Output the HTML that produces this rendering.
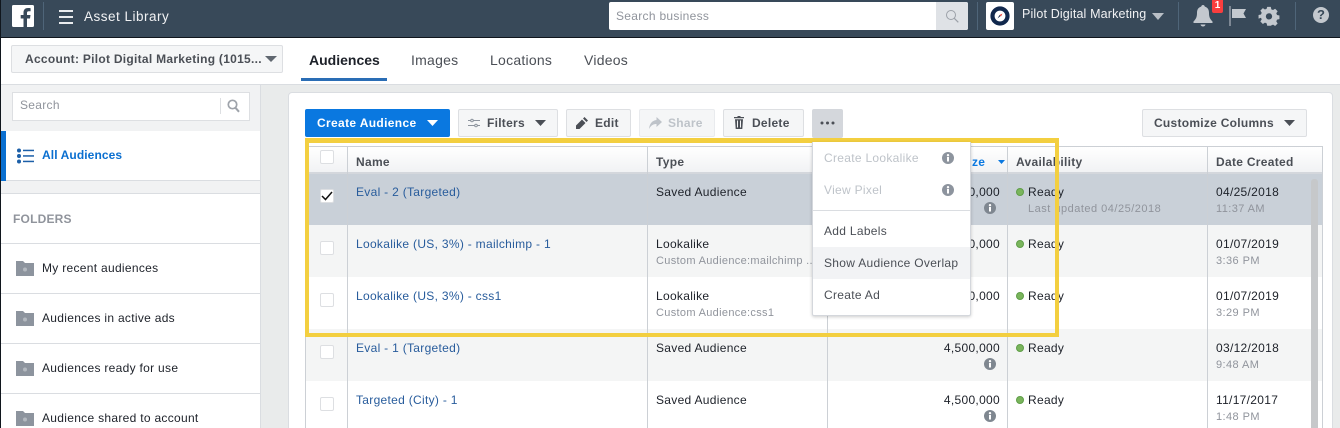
<!DOCTYPE html>
<html><head><meta charset="utf-8"><style>
*{box-sizing:border-box}
html,body{margin:0;padding:0;width:1340px;height:428px;overflow:hidden;background:#e9ebeb}
body{position:relative;font-family:"Liberation Sans",sans-serif;font-size:12px;color:#1d2129;letter-spacing:.3px}
.a{position:absolute;white-space:nowrap}
.b{position:absolute;background:#f5f6f7;border:1px solid #dddfe2;border-radius:2px;color:#4b4f56;font-weight:bold;height:28px;line-height:26px;white-space:nowrap;letter-spacing:.27px}
.l{color:#285c9c}
.s{color:#90949c;letter-spacing:.42px}
.cb{position:absolute;width:14px;height:14px;background:#fff;border:1px solid #dddfe2;border-radius:2px}
.v{position:absolute;width:1px;background:#ccd0d5}
.h{position:absolute;background:#dadde1;height:1px}
.t{position:absolute;line-height:14px;white-space:nowrap}
.dot{position:absolute;left:1016px;width:8px;height:8px;border-radius:50%;background:#7ab55c;border:1px solid #5f9e48}
svg{position:absolute;display:block}
</style></head><body>

<!-- top bar -->
<div class="a" style="left:0;top:0;width:1340px;height:38px;background:#384959;border-bottom:1px solid #10161d"></div>
<svg style="left:12px;top:5px" width="22" height="22" viewBox="0 0 22 22"><path fill="#fff" d="M1.5 0h19A1.5 1.5 0 0 1 22 1.500v19a1.500 1.500 0 0 1-1.500 1.500H15v-8.500h3l.5-3.500H15V8c0-1 .4-1.700 1.800-1.700h1.800V3.200c-.4 0-1.400-.2-2.600-.2-2.700 0-4.500 1.600-4.500 4.600V10H8.700v3.500h2.800V22h-10A1.500 1.500 0 0 1 0 20.500v-19A1.500 1.500 0 0 1 1.500 0z"/></svg>
<div class="a" style="left:43px;top:2px;width:1px;height:28px;background:#4f6579"></div>
<div class="a" style="left:59px;top:10px;width:14px;height:2px;background:#e9ebee"></div>
<div class="a" style="left:59px;top:16px;width:14px;height:2px;background:#e9ebee"></div>
<div class="a" style="left:59px;top:22px;width:14px;height:2px;background:#e9ebee"></div>
<div class="a" style="left:84px;top:9px;font-size:13.500px;line-height:16px;color:#f1f2f4;letter-spacing:.5px">Asset Library</div>

<div class="a" style="left:609px;top:2px;width:359px;height:28px;background:#fff;border-radius:2px"></div>
<div class="a" style="left:936px;top:2px;width:32px;height:28px;background:#dfe2e6;border-radius:0 2px 2px 0"></div>
<div class="a" style="left:616px;top:9px;color:#90949c;line-height:15px;letter-spacing:.3px">Search business</div>
<svg style="left:945px;top:9px" width="15" height="15" viewBox="0 0 15 15"><circle cx="6" cy="6" r="4.500" fill="none" stroke="#9ca1a8" stroke-width="1"/><path d="M9.300 9.300l4 4" stroke="#9ca1a8" stroke-width="1.200"/></svg>
<div class="a" style="left:977px;top:2px;width:1px;height:28px;background:#4f6579"></div>
<div class="a" style="left:986px;top:2px;width:28px;height:28px;background:#fff;border-radius:2px"></div>
<svg style="left:990px;top:6px" width="20" height="20" viewBox="0 0 20 20"><circle cx="10" cy="10" r="7.500" fill="none" stroke="#11284d" stroke-width="4.200"/><circle cx="10" cy="10" r="4.500" fill="#fff"/><path d="M7.500 12.500l2-3.500 1 1z" fill="#11284d"/><path d="M12.500 7.500l-3 1.500 1.500 1.500z" fill="#e8463c"/></svg>
<div class="a" style="left:1022px;top:7px;color:#f1f2f4;line-height:15px;letter-spacing:.15px;font-size:12.500px">Pilot Digital Marketing</div>
<svg style="left:1152px;top:13px" width="12" height="7" viewBox="0 0 12 7"><path d="M0 0h12L6 7z" fill="#b9bfc6"/></svg>
<div class="a" style="left:1178px;top:2px;width:1px;height:28px;background:#4f6579"></div>
<svg style="left:1193px;top:5px" width="20" height="22" viewBox="0 0 20 22"><path fill="#c3c8ce" d="M10 0c1 0 1.700.7 1.800 1.600C15 2.500 16 5 16 8c0 4 1 6 3.500 8.500V18H.5v-1.500C3 14 4 12 4 8c0-3 1-5.500 4.200-6.400C8.300.7 9 0 10 0zM7.500 19.500h5c-.3 1.200-1.300 2-2.500 2s-2.200-.8-2.500-2z"/></svg>
<div class="a" style="left:1212px;top:0;width:11px;height:13px;background:#fa3e3e;border-radius:0 0 2px 2px;color:#fff;font-weight:bold;font-size:10px;line-height:12px;text-align:center;letter-spacing:0">1</div>
<svg style="left:1229px;top:6px" width="18" height="20" viewBox="0 0 18 20"><path d="M1 0v20" stroke="#c3c8ce" stroke-width="1"/><path fill="#c3c8ce" d="M3 3h14l-2.500 4.500L17 12H3z"/></svg>
<svg style="left:1258px;top:5px" width="22" height="22" viewBox="0 0 22 22"><path fill="#c3c8ce" fill-rule="evenodd" d="M9 1h4l.6 2.700 1.900.8 2.300-1.500 2.800 2.800-1.500 2.300.8 1.900 2.700.6v4l-2.700.6-.8 1.900 1.500 2.300-2.800 2.800-2.300-1.500-1.900.8L13 22H9l-.6-2.700-1.900-.8-2.300 1.500-2.800-2.800 1.500-2.300-.8-1.900L-.6 14v-4l2.700-.6.800-1.900-1.500-2.300 2.800-2.800 2.300 1.500 1.900-.8zM11 8a3.500 3.500 0 1 0 0 7 3.500 3.500 0 0 0 0-7z" transform="translate(1.100 1) scale(.9)"/></svg>
<div class="a" style="left:1295px;top:2px;width:1px;height:28px;background:#4f6579"></div>
<div class="a" style="left:1313px;top:7px;width:16px;height:16px;border-radius:50%;background:#c3c8ce;color:#384959;font-weight:bold;font-size:13px;line-height:16px;text-align:center;letter-spacing:0">?</div>

<!-- sub header -->
<div class="a" style="left:1px;top:38px;width:1339px;height:47px;background:#fff;border-bottom:1px solid #dadde1"></div>
<div class="b" style="left:11px;top:45px;width:272px;padding-left:13px;letter-spacing:.28px;font-size:12px">Account: Pilot Digital Marketing (1015...</div>
<svg style="left:265px;top:56px" width="12" height="6" viewBox="0 0 12 6"><path d="M0 0h12L6 6z" fill="#606770"/></svg>
<div class="a" style="left:309px;top:52px;font-size:14px;line-height:17px;color:#1d2129;font-weight:bold;letter-spacing:0">Audiences</div>
<div class="a" style="left:301px;top:78px;width:86px;height:3px;background:#2a6db5"></div>
<div class="a" style="left:411px;top:52px;font-size:14px;line-height:17px;color:#4b4f56;letter-spacing:.25px">Images</div>
<div class="a" style="left:490px;top:52px;font-size:14px;line-height:17px;color:#4b4f56;letter-spacing:.25px">Locations</div>
<div class="a" style="left:584px;top:52px;font-size:14px;line-height:17px;color:#4b4f56;letter-spacing:.25px">Videos</div>

<!-- sidebar -->
<div class="a" style="left:0;top:0;width:1px;height:428px;background:#10161d"></div>
<div class="a" style="left:1px;top:85px;width:259px;height:343px;background:#f1f2f3"></div>
<div class="a" style="left:12px;top:92px;width:238px;height:29px;background:#fff;border:1px solid #dddfe2"></div>
<div class="a" style="left:20px;top:98px;color:#90949c;line-height:15px">Search</div>
<div class="a" style="left:220px;top:98px;width:1px;height:16px;background:#dddfe2"></div>
<svg style="left:227px;top:99px" width="13" height="14" viewBox="0 0 13 14"><circle cx="5.500" cy="5.500" r="4.200" fill="none" stroke="#9ea3aa" stroke-width="1.700"/><path d="M8.500 8.800l3.500 4" stroke="#9ea3aa" stroke-width="2"/></svg>
<div class="a" style="left:1px;top:131px;width:259px;height:50px;background:#fff;border-bottom:1px solid #dadde1"></div>
<div class="a" style="left:1px;top:131px;width:5px;height:50px;background:#0a6fd0"></div>
<svg style="left:17px;top:148px" width="17" height="16" viewBox="0 0 17 16"><g fill="#1c5fa8"><circle cx="2" cy="2.500" r="2"/><circle cx="2" cy="8" r="2"/><circle cx="2" cy="13.500" r="2"/><rect x="6" y="1.700" width="11" height="1.500"/><rect x="6" y="7.200" width="11" height="1.500"/><rect x="6" y="12.700" width="11" height="1.500"/></g></svg>
<div class="a" style="left:42px;top:148px;font-weight:bold;color:#0a6fd0;line-height:15px;letter-spacing:.1px">All Audiences</div>
<div class="a" style="left:1px;top:193px;width:259px;height:235px;background:#fff;border-top:1px solid #dadde1"></div>
<div class="a" style="left:13px;top:212px;font-weight:bold;color:#90949c;line-height:15px;letter-spacing:.2px">FOLDERS</div>
<div class="h" style="left:1px;top:243px;width:259px"></div>
<div class="h" style="left:1px;top:293px;width:259px"></div>
<div class="h" style="left:1px;top:343px;width:259px"></div>
<div class="h" style="left:1px;top:393px;width:259px"></div>
<svg style="left:16px;top:261px" width="18" height="15" viewBox="0 0 18 15"><path fill="#8d949e" d="M0 0h7l2 2h9v13H0z"/><circle cx="9" cy="8.500" r="2" fill="#b4b9c0"/></svg>
<div class="t" style="left:42px;top:261px">My recent audiences</div>
<svg style="left:16px;top:311px" width="18" height="15" viewBox="0 0 18 15"><path fill="#8d949e" d="M0 0h7l2 2h9v13H0z"/><circle cx="9" cy="8.500" r="2" fill="#b4b9c0"/></svg>
<div class="t" style="left:42px;top:311px">Audiences in active ads</div>
<svg style="left:16px;top:361px" width="18" height="15" viewBox="0 0 18 15"><path fill="#8d949e" d="M0 0h7l2 2h9v13H0z"/><circle cx="9" cy="8.500" r="2" fill="#b4b9c0"/></svg>
<div class="t" style="left:42px;top:361px">Audiences ready for use</div>
<svg style="left:16px;top:411px" width="18" height="15" viewBox="0 0 18 15"><path fill="#8d949e" d="M0 0h7l2 2h9v13H0z"/><circle cx="9" cy="8.500" r="2" fill="#b4b9c0"/></svg>
<div class="t" style="left:42px;top:411px">Audience shared to account</div>
<div class="a" style="left:260px;top:85px;width:1px;height:343px;background:#dadde1"></div>

<!-- main panel -->
<div class="a" style="left:288px;top:92px;width:1045px;height:340px;background:#fff;border:1px solid #dadde1;border-radius:4px"></div>

<!-- toolbar -->
<div class="a" style="left:305px;top:109px;width:145px;height:28px;background:#0a78e0;border-radius:2px;color:#fff;font-weight:bold;line-height:28px;padding-left:12px;letter-spacing:.35px">Create Audience</div>
<svg style="left:427px;top:120px" width="11" height="6" viewBox="0 0 11 6"><path d="M0 0h11L5.500 6z" fill="#fff"/></svg>
<div class="b" style="left:458px;top:109px;width:100px;padding-left:28px">Filters</div>
<svg style="left:468px;top:118px" width="12" height="10" viewBox="0 0 12 10"><path d="M0 2.500h12M0 7.500h12" stroke="#8d949e" stroke-width="1"/><circle cx="4" cy="2.500" r="1.300" fill="#f5f6f7" stroke="#8d949e"/><circle cx="8" cy="7.500" r="1.300" fill="#f5f6f7" stroke="#8d949e"/></svg>
<svg style="left:535px;top:120px" width="11" height="6" viewBox="0 0 11 6"><path d="M0 0h11L5.500 6z" fill="#4b4f56"/></svg>
<div class="b" style="left:566px;top:109px;width:65px;padding-left:28px">Edit</div>
<svg style="left:576px;top:117px" width="12" height="12" viewBox="0 0 12 12"><path fill="#4b4f56" d="M8.500 0L12 3.500l-1.500 1.500L7 1.500zM6 2.500L9.500 6 3.500 12H0V8.500z"/></svg>
<div class="b" style="left:639px;top:109px;width:76px;padding-left:28px;color:#bec3c9;border-color:#e9ebee">Share</div>
<svg style="left:649px;top:117px" width="13" height="12" viewBox="0 0 13 12"><path fill="#bec3c9" d="M7.500 0L13 5l-5.500 5V7C4 7 2 8.500 0 12c.5-5 3-8.500 7.500-9z"/></svg>
<div class="b" style="left:723px;top:109px;width:81px;padding-left:28px">Delete</div>
<svg style="left:734px;top:116px" width="10" height="13" viewBox="0 0 10 13"><path fill="#4b4f56" d="M3.500 0h3v1H10v1.200H0V1h3.500zM1 3.200h8L8.300 13H1.700zM3 4.500v7h1v-7zM6 4.500v7h1v-7z"/></svg>
<div class="a" style="left:812px;top:109px;width:31px;height:29px;background:#d4d7dc;border-radius:2px"></div>
<svg style="left:820px;top:121px" width="15" height="4" viewBox="0 0 15 4"><g fill="#4b4f56"><circle cx="2" cy="2" r="1.500"/><circle cx="7.500" cy="2" r="1.500"/><circle cx="13" cy="2" r="1.500"/></g></svg>
<div class="b" style="left:1142px;top:109px;width:165px;padding-left:11px">Customize Columns</div>
<svg style="left:1284px;top:120px" width="11" height="6" viewBox="0 0 11 6"><path d="M0 0h11L5.500 6z" fill="#4b4f56"/></svg>

<!-- table -->
<div class="a" style="left:305px;top:146px;width:1018px;height:282px;background:#fff;border:1px solid #ccd0d5;border-bottom:0"></div>
<div class="a" style="left:306px;top:147px;width:1016px;height:27px;background:linear-gradient(#fff,#f1f2f4);border-bottom:2px solid #d4d7dc"></div>
<div class="a" style="left:306px;top:174px;width:1016px;height:51px;background:#c9d0d8"></div>
<div class="a" style="left:306px;top:225px;width:1016px;height:52px;background:#f4f5f5"></div>
<div class="a" style="left:306px;top:329px;width:1016px;height:52px;background:#f4f5f5"></div>
<div class="v" style="left:347px;top:147px;height:281px"></div>
<div class="v" style="left:647px;top:147px;height:281px"></div>
<div class="v" style="left:827px;top:147px;height:281px"></div>
<div class="v" style="left:1007px;top:147px;height:281px"></div>
<div class="v" style="left:1207px;top:147px;height:281px"></div>
<div class="cb" style="left:320px;top:150px"></div>
<div class="t" style="left:356px;top:155px;font-weight:bold;color:#4b4f56">Name</div>
<div class="t" style="left:656px;top:155px;font-weight:bold;color:#4b4f56">Type</div>
<div class="t" style="left:1016px;top:155px;font-weight:bold;color:#4b4f56">Availability</div>
<div class="t" style="left:1216px;top:155px;font-weight:bold;color:#4b4f56">Date Created</div>
<div class="t" style="left:972px;top:155px;font-weight:bold;color:#0a78e0">ze</div>
<svg style="left:998px;top:160px" width="7" height="4" viewBox="0 0 7 4"><path d="M0 0h7L3.500 4z" fill="#0a78e0"/></svg>

<div class="cb" style="left:320px;top:189px"></div>
<svg style="left:321px;top:191px" width="12" height="10" viewBox="0 0 12 10"><path d="M1 5l3.500 3.500L11 1" fill="none" stroke="#111" stroke-width="1.500"/></svg>
<div class="cb" style="left:320px;top:241px"></div>
<div class="cb" style="left:320px;top:293px"></div>
<div class="cb" style="left:320px;top:345px"></div>
<div class="cb" style="left:320px;top:397px"></div>

<div class="t l" style="left:356px;top:185px">Eval - 2 (Targeted)</div>
<div class="t l" style="left:356px;top:237px">Lookalike (US, 3%) - mailchimp - 1</div>
<div class="t l" style="left:356px;top:289px">Lookalike (US, 3%) - css1</div>
<div class="t l" style="left:356px;top:341px">Eval - 1 (Targeted)</div>
<div class="t l" style="left:356px;top:393px">Targeted (City) - 1</div>

<div class="t" style="left:656px;top:185px">Saved Audience</div>
<div class="t" style="left:656px;top:237px">Lookalike</div>
<div class="t s" style="left:656px;top:254px;font-size:11px;letter-spacing:.32px">Custom Audience:mailchimp ...</div>
<div class="t" style="left:656px;top:289px">Lookalike</div>
<div class="t s" style="left:656px;top:306px;font-size:11px;letter-spacing:.32px">Custom Audience:css1</div>
<div class="t" style="left:656px;top:341px">Saved Audience</div>
<div class="t" style="left:656px;top:393px">Saved Audience</div>

<div class="t" style="left:942px;top:185px;width:58px;text-align:right">4,500,000</div>
<div class="t" style="left:942px;top:237px;width:58px;text-align:right">4,500,000</div>
<div class="t" style="left:942px;top:289px;width:58px;text-align:right">4,500,000</div>
<div class="t" style="left:942px;top:341px;width:58px;text-align:right">4,500,000</div>
<div class="t" style="left:942px;top:393px;width:58px;text-align:right">4,500,000</div>
<svg style="left:984px;top:202px" width="12" height="12" viewBox="0 0 12 12"><circle cx="6" cy="6" r="6" fill="#7f8790"/><rect x="5" y="5" width="2" height="4.500" fill="#fff"/><circle cx="6" cy="3.200" r="1.200" fill="#fff"/></svg>
<svg style="left:984px;top:358px" width="12" height="12" viewBox="0 0 12 12"><circle cx="6" cy="6" r="6" fill="#7f8790"/><rect x="5" y="5" width="2" height="4.500" fill="#fff"/><circle cx="6" cy="3.200" r="1.200" fill="#fff"/></svg>
<svg style="left:984px;top:410px" width="12" height="12" viewBox="0 0 12 12"><circle cx="6" cy="6" r="6" fill="#7f8790"/><rect x="5" y="5" width="2" height="4.500" fill="#fff"/><circle cx="6" cy="3.200" r="1.200" fill="#fff"/></svg>

<div class="dot" style="top:188px"></div><div class="t" style="left:1028px;top:185px">Ready</div>
<div class="t s" style="left:1028px;top:202px;font-size:11px;letter-spacing:.5px">Last updated 04/25/2018</div>
<div class="dot" style="top:240px"></div><div class="t" style="left:1028px;top:237px">Ready</div>
<div class="dot" style="top:292px"></div><div class="t" style="left:1028px;top:289px">Ready</div>
<div class="dot" style="top:344px"></div><div class="t" style="left:1028px;top:341px">Ready</div>
<div class="dot" style="top:396px"></div><div class="t" style="left:1028px;top:393px">Ready</div>

<div class="t" style="left:1216px;top:185px">04/25/2018</div><div class="t s" style="left:1216px;top:202px;font-size:11px">11:37 AM</div>
<div class="t" style="left:1216px;top:237px">01/07/2019</div><div class="t s" style="left:1216px;top:254px;font-size:11px">3:36 PM</div>
<div class="t" style="left:1216px;top:289px">01/07/2019</div><div class="t s" style="left:1216px;top:306px;font-size:11px">3:29 PM</div>
<div class="t" style="left:1216px;top:341px">03/12/2018</div><div class="t s" style="left:1216px;top:358px;font-size:11px">9:48 AM</div>
<div class="t" style="left:1216px;top:393px">11/17/2017</div><div class="t s" style="left:1216px;top:410px;font-size:11px">1:48 PM</div>

<div class="a" style="left:1311px;top:179px;width:7px;height:249px;background:#c6c8ca;border-radius:3px 3px 0 0"></div>

<!-- yellow highlight -->
<div class="a" style="left:305px;top:138px;width:754px;height:199px;border:4px solid #f3cf40;border-top-width:5px"></div>

<!-- dropdown -->
<div class="a" style="left:812px;top:142px;width:159px;height:174px;background:#fff;border:1px solid #d4d7dc;border-top:0;border-radius:0 0 2px 2px;box-shadow:0 1px 3px rgba(0,0,0,.2)"></div>
<div class="t" style="left:824px;top:151px;color:#bec3c9">Create Lookalike</div>
<div class="t" style="left:824px;top:183px;color:#bec3c9">View Pixel</div>
<svg style="left:942px;top:152px" width="12" height="12" viewBox="0 0 12 12"><circle cx="6" cy="6" r="6" fill="#8d949e"/><rect x="5" y="5" width="2" height="4.500" fill="#fff"/><circle cx="6" cy="3.200" r="1.200" fill="#fff"/></svg>
<svg style="left:942px;top:184px" width="12" height="12" viewBox="0 0 12 12"><circle cx="6" cy="6" r="6" fill="#8d949e"/><rect x="5" y="5" width="2" height="4.500" fill="#fff"/><circle cx="6" cy="3.200" r="1.200" fill="#fff"/></svg>
<div class="h" style="left:813px;top:210px;width:157px"></div>
<div class="t" style="left:824px;top:224px;color:#4b4f56">Add Labels</div>
<div class="a" style="left:813px;top:247px;width:157px;height:32px;background:#f2f3f5"></div>
<div class="t" style="left:824px;top:256px;color:#4b4f56">Show Audience Overlap</div>
<div class="t" style="left:824px;top:288px;color:#4b4f56">Create Ad</div>
</body></html>
